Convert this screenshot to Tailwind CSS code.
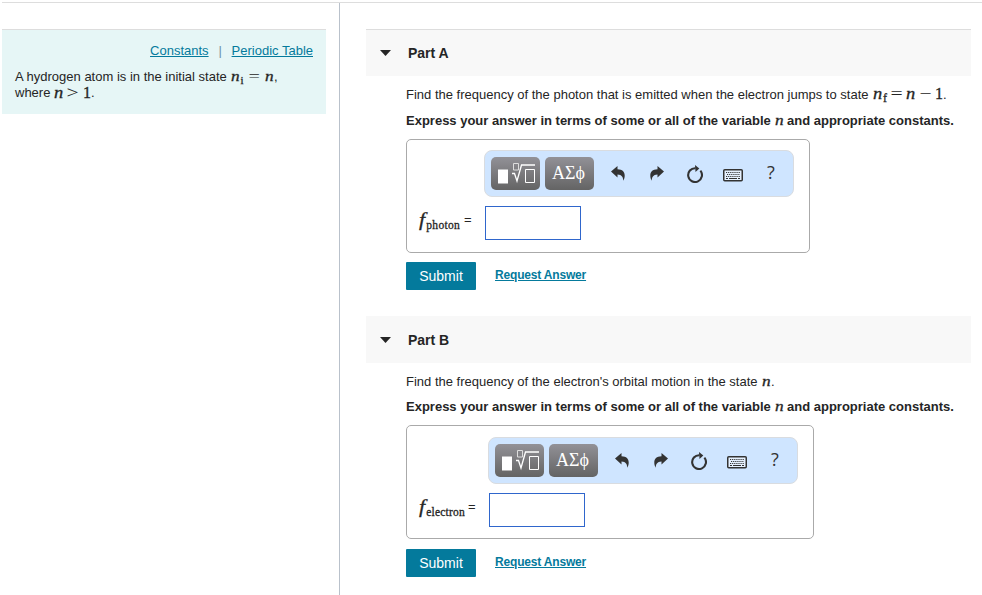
<!DOCTYPE html>
<html lang="en">
<head>
  <meta charset="UTF-8" />
  <meta name="viewport" content="width=device-width, initial-scale=1" />
  <title>Hydrogen atom</title>
  <script src="https://cdn.jsdelivr.net/npm/@tailwindcss/browser@4"></script>
  <style>
    body { font-family: "Liberation Sans", Arial, sans-serif; }
    .math { font-family: "Liberation Serif", "Times New Roman", serif; -webkit-text-stroke: 0.3px currentColor; }
    .math i { display: inline-block; transform: scaleX(1.15); transform-origin: left; }
    .math b { font-weight: normal; display: inline-block; transform: scaleX(1.35); -webkit-text-stroke: 0; }
    .greek { font-family: "Liberation Serif", "DejaVu Serif", serif; }
  </style>
</head>
<body class="h-[595px] overflow-hidden bg-white pl-[2px] pt-[2px] text-[13px] text-[#252525]">
  <!-- Icons shared by both toolbars -->
  <svg class="hidden">
    <symbol id="undo" viewBox="0 0 14 15"><path d="M0 5.500 6.500 0v3.200c5 0 7.200 2.800 7.200 6.300 0 2-.5 3.500-1.400 5.300-.1-3.500-1.300-6-5.800-6.300v3z" fill="#333" /></symbol>
    <symbol id="reset" viewBox="0 0 16 18"><path d="M8.500 3.200A6.900 6.900 0 1 0 13.400 5.700" fill="none" stroke="#333" stroke-width="2.100" /><path d="M8 0l4.300 3.500L8.500 7z" fill="#333" /></symbol>
    <symbol id="keyboard" viewBox="0 0 20 13"><rect x=".75" y=".75" width="18.500" height="11" rx="1" fill="#e6f1ff" stroke="#333" stroke-width="1.500" /><path d="M3 3.500h14M4 5.500h13M3 7.500h14" stroke="#333" stroke-width="1" stroke-dasharray="1.200 .9" /><path d="M3 9.500h2M6 9.500h8M15 9.500h2" stroke="#333" /></symbol>
    <symbol id="template" viewBox="0 0 49 33"><path d="M7 12.500h10v14H7z" fill="#fff" /><path d="M22.500 6.500h5v6.500h-5z" fill="none" stroke="#ddd" /><path d="M21 16.500h2.500l2.500 7.500 4.500-16H44" fill="none" stroke="#fff" stroke-width="1.300" /><path d="M34.500 12.500h9v13h-9z" fill="none" stroke="#fff" /></symbol>
  </svg>

  <div class="flex h-full border-t border-[#ddd]">
    <!-- Problem statement -->
    <aside class="w-[338px] shrink-0 border-r border-[#b9c1cb] pt-[26px]">
      <div class="h-[85px] w-[324px] border-t border-[#ddd] bg-[#e6f6f6] px-[13px] pt-[13px]">
        <div class="flex justify-end leading-4 text-[#047a9c]">
          <a href="#" class="underline">Constants</a>
          <span class="w-[23px] text-center text-[#6f93a8]">|</span>
          <a href="#" class="underline">Periodic Table</a>
        </div>
        <div class="mt-[10px] leading-4 whitespace-nowrap">
          <p class="flex h-4"><span class="w-[216px]">A hydrogen atom is in the initial state</span><span class="math -mt-px flex w-[43px] items-baseline text-[15px] leading-4"><i>n</i><span class="relative top-[3px] ml-[2px] text-[11px]">i</span><b class="mx-auto">=</b><i class="w-[9px]">n</i></span>,</p>
          <p class="flex h-4"><span class="w-[39px]">where</span><span class="math flex w-[37px] items-baseline justify-between text-[16px] leading-4"><i class="w-[9px]">n</i><b>&gt;</b><span>1</span></span>.</p>
        </div>
      </div>
    </aside>

    <main class="w-[631px] pl-[26px] pt-[26px]">
      <!-- Part A -->
      <section class="h-[287px]">
        <h2 class="flex h-[47px] items-center border-t border-[#ddd] bg-[#f8f8f8] pl-[14px] text-sm font-bold">
          <svg class="mr-[17px] h-[6px] w-[11px]" viewBox="0 0 11 6"><path d="M0 0h11L5.500 6z" fill="#252525" /></svg>
          Part A
        </h2>
        <div class="pl-[40px] pt-[11px]">
          <p class="flex h-4 whitespace-nowrap leading-4"><span class="w-[467px]">Find the frequency of the photon that is emitted when the electron jumps to state</span><span class="math -mt-px flex w-[70px] items-baseline text-[16px] leading-4"><i>n</i><span class="relative top-[3px] ml-[2px] text-[12px]">f</span><b class="mx-auto">=</b><i class="w-[10px]">n</i><b class="mx-auto">−</b><span>1</span></span>.</p>
          <p class="mt-[10px] flex h-4 whitespace-nowrap font-bold leading-4"><span class="w-[369px]">Express your answer in terms of some or all of the variable</span><span class="math -mt-px w-[12px] text-[15px] font-normal"><i>n</i></span><span>and appropriate constants.</span></p>
          <div class="mt-[10px] h-[114px] w-[404px] rounded-[5px] border border-[#aaa] pl-[77px] pt-[10px]">
            <div class="flex h-[47px] w-[310px] items-center rounded-lg border border-[#d9dce0] bg-[#cfe5ff] pl-[6px]">
              <button class="h-[33px] w-[49px] rounded-[5px] bg-linear-to-b from-[#929197] to-[#646464]"><svg class="h-[33px] w-[49px]"><use href="#template" /></svg></button>
              <button class="greek ml-[5px] h-[33px] w-[49px] rounded-[5px] bg-linear-to-b from-[#929197] to-[#646464] pb-[2px] pr-[2px] text-[18px] leading-4 text-white">ΑΣϕ</button>
              <svg class="ml-[17px] h-[15px] w-[14px]"><use href="#undo" /></svg>
              <svg class="ml-[25px] h-[15px] w-[14px] -scale-x-100"><use href="#undo" /></svg>
              <svg class="ml-[23px] h-[18px] w-[16px]"><use href="#reset" /></svg>
              <svg class="ml-[20px] mt-[4px] h-[13px] w-[20px]"><use href="#keyboard" /></svg>
              <span class="-mt-[3px] ml-[24px] font-['Open_Sans'] text-[18px] leading-5 text-[#333]">?</span>
            </div>
            <div class="-ml-[65px] mt-[9px] flex">
              <label for="photon" class="flex w-[66px] items-start leading-[28px]"><span class="math flex w-[45px] items-baseline text-[19px] leading-7"><i>f</i><span class="relative top-[3px] ml-[2px] text-[11.500px] tracking-[0.3px]">photon</span></span>=</label>
              <input id="photon" class="h-[34px] w-[96px] border border-[#2f66cc] bg-white" />
            </div>
          </div>
          <div class="mt-[9px] flex items-center">
            <button class="h-[28px] w-[70px] rounded-[1px] bg-[#047a9c] text-[14px] text-white">Submit</button>
            <a href="#" class="-mt-[3px] ml-[19px] text-[12px] font-bold tracking-[-0.18px] text-[#047a9c] underline">Request Answer</a>
          </div>
        </div>
      </section>

      <!-- Part B -->
      <section>
        <h2 class="flex h-[47px] items-center bg-[#f8f8f8] pl-[14px] text-sm font-bold">
          <svg class="mr-[17px] h-[6px] w-[11px]" viewBox="0 0 11 6"><path d="M0 0h11L5.500 6z" fill="#252525" /></svg>
          Part B
        </h2>
        <div class="pl-[40px] pt-[11px]">
          <p class="flex h-4 whitespace-nowrap leading-4"><span class="w-[356px]">Find the frequency of the electron's orbital motion in the state</span><span class="math -mt-px w-[9px] text-[15px]"><i>n</i></span>.</p>
          <p class="mt-[9px] flex h-4 whitespace-nowrap font-bold leading-4"><span class="w-[369px]">Express your answer in terms of some or all of the variable</span><span class="math -mt-px w-[12px] text-[15px] font-normal"><i>n</i></span><span>and appropriate constants.</span></p>
          <div class="mt-[10px] h-[114px] w-[408px] rounded-[5px] border border-[#aaa] pl-[81px] pt-[11px]">
            <div class="flex h-[47px] w-[310px] items-center rounded-lg border border-[#d9dce0] bg-[#cfe5ff] pl-[6px]">
              <button class="h-[33px] w-[49px] rounded-[5px] bg-linear-to-b from-[#929197] to-[#646464]"><svg class="h-[33px] w-[49px]"><use href="#template" /></svg></button>
              <button class="greek ml-[5px] h-[33px] w-[49px] rounded-[5px] bg-linear-to-b from-[#929197] to-[#646464] pb-[2px] pr-[2px] text-[18px] leading-4 text-white">ΑΣϕ</button>
              <svg class="ml-[17px] h-[15px] w-[14px]"><use href="#undo" /></svg>
              <svg class="ml-[25px] h-[15px] w-[14px] -scale-x-100"><use href="#undo" /></svg>
              <svg class="ml-[23px] h-[18px] w-[16px]"><use href="#reset" /></svg>
              <svg class="ml-[20px] mt-[4px] h-[13px] w-[20px]"><use href="#keyboard" /></svg>
              <span class="-mt-[3px] ml-[24px] font-['Open_Sans'] text-[18px] leading-5 text-[#333]">?</span>
            </div>
            <div class="-ml-[69px] mt-[9px] flex">
              <label for="electron" class="flex w-[70px] items-start leading-[28px]"><span class="math flex w-[49px] items-baseline text-[19px] leading-7"><i>f</i><span class="relative top-[3px] ml-[2px] text-[11.500px] tracking-[0.2px]">electron</span></span>=</label>
              <input id="electron" class="h-[34px] w-[96px] border border-[#2f66cc] bg-white" />
            </div>
          </div>
          <div class="mt-[10px] flex items-center">
            <button class="h-[28px] w-[70px] rounded-[1px] bg-[#047a9c] text-[14px] text-white">Submit</button>
            <a href="#" class="-mt-[3px] ml-[19px] text-[12px] font-bold tracking-[-0.18px] text-[#047a9c] underline">Request Answer</a>
          </div>
        </div>
      </section>
    </main>
  </div>
</body>
</html>
